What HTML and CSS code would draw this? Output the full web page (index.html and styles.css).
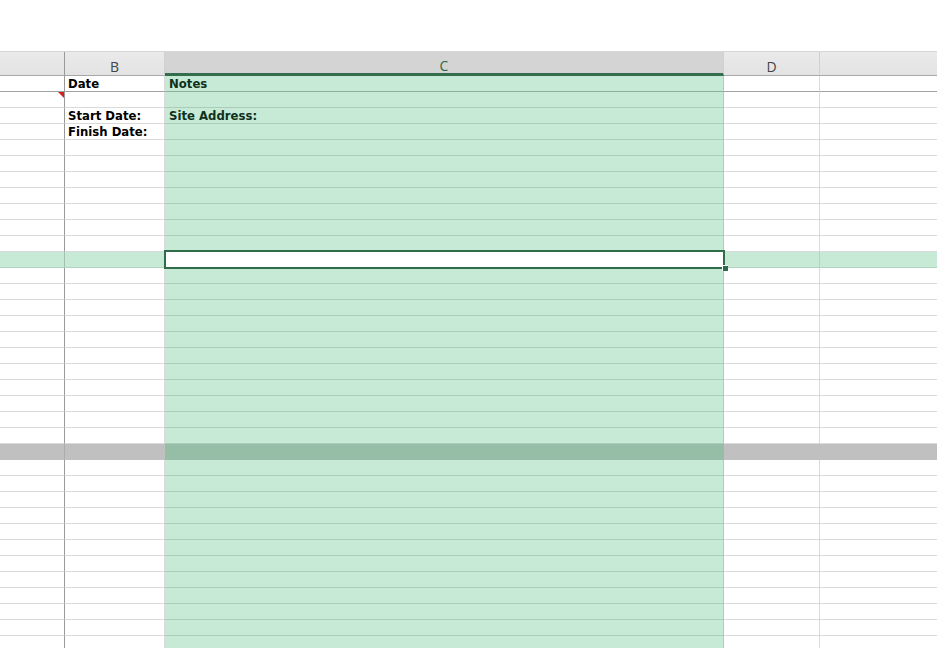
FILE: index.html
```html
<!DOCTYPE html>
<html>
<head>
<meta charset="utf-8">
<link rel="stylesheet" href="styles.css">
</head>
<body>
<div class="sheet">
  <div class="head">
    <div class="h ha"></div>
    <div class="h hb">B</div>
    <div class="h hc">C</div>
    <div class="h hd">D</div>
    <div class="h he"></div>
  </div>
  <div class="row first"><div class="a"></div><div class="b">Date</div><div class="c">Notes</div><div class="d"></div><div class="e"></div></div>
  <div class="row"><div class="a note"></div><div class="b"></div><div class="c"></div><div class="d"></div><div class="e"></div></div>
  <div class="row"><div class="a"></div><div class="b">Start Date:</div><div class="c">Site Address:</div><div class="d"></div><div class="e"></div></div>
  <div class="row"><div class="a"></div><div class="b">Finish Date:</div><div class="c"></div><div class="d"></div><div class="e"></div></div>
  <div class="row"><div class="a"></div><div class="b"></div><div class="c"></div><div class="d"></div><div class="e"></div></div>
  <div class="row"><div class="a"></div><div class="b"></div><div class="c"></div><div class="d"></div><div class="e"></div></div>
  <div class="row"><div class="a"></div><div class="b"></div><div class="c"></div><div class="d"></div><div class="e"></div></div>
  <div class="row"><div class="a"></div><div class="b"></div><div class="c"></div><div class="d"></div><div class="e"></div></div>
  <div class="row"><div class="a"></div><div class="b"></div><div class="c"></div><div class="d"></div><div class="e"></div></div>
  <div class="row"><div class="a"></div><div class="b"></div><div class="c"></div><div class="d"></div><div class="e"></div></div>
  <div class="row"><div class="a"></div><div class="b"></div><div class="c"></div><div class="d"></div><div class="e"></div></div>
  <div class="row sel"><div class="a"></div><div class="b"></div><div class="c active"></div><div class="d"></div><div class="e"></div></div>
  <div class="row"><div class="a"></div><div class="b"></div><div class="c"></div><div class="d"></div><div class="e"></div></div>
  <div class="row"><div class="a"></div><div class="b"></div><div class="c"></div><div class="d"></div><div class="e"></div></div>
  <div class="row"><div class="a"></div><div class="b"></div><div class="c"></div><div class="d"></div><div class="e"></div></div>
  <div class="row"><div class="a"></div><div class="b"></div><div class="c"></div><div class="d"></div><div class="e"></div></div>
  <div class="row"><div class="a"></div><div class="b"></div><div class="c"></div><div class="d"></div><div class="e"></div></div>
  <div class="row"><div class="a"></div><div class="b"></div><div class="c"></div><div class="d"></div><div class="e"></div></div>
  <div class="row"><div class="a"></div><div class="b"></div><div class="c"></div><div class="d"></div><div class="e"></div></div>
  <div class="row"><div class="a"></div><div class="b"></div><div class="c"></div><div class="d"></div><div class="e"></div></div>
  <div class="row"><div class="a"></div><div class="b"></div><div class="c"></div><div class="d"></div><div class="e"></div></div>
  <div class="row"><div class="a"></div><div class="b"></div><div class="c"></div><div class="d"></div><div class="e"></div></div>
  <div class="row"><div class="a"></div><div class="b"></div><div class="c"></div><div class="d"></div><div class="e"></div></div>
  <div class="row gray"><div class="a"></div><div class="b"></div><div class="c"></div><div class="d"></div><div class="e"></div></div>
  <div class="row"><div class="a"></div><div class="b"></div><div class="c"></div><div class="d"></div><div class="e"></div></div>
  <div class="row"><div class="a"></div><div class="b"></div><div class="c"></div><div class="d"></div><div class="e"></div></div>
  <div class="row"><div class="a"></div><div class="b"></div><div class="c"></div><div class="d"></div><div class="e"></div></div>
  <div class="row"><div class="a"></div><div class="b"></div><div class="c"></div><div class="d"></div><div class="e"></div></div>
  <div class="row"><div class="a"></div><div class="b"></div><div class="c"></div><div class="d"></div><div class="e"></div></div>
  <div class="row"><div class="a"></div><div class="b"></div><div class="c"></div><div class="d"></div><div class="e"></div></div>
  <div class="row"><div class="a"></div><div class="b"></div><div class="c"></div><div class="d"></div><div class="e"></div></div>
  <div class="row"><div class="a"></div><div class="b"></div><div class="c"></div><div class="d"></div><div class="e"></div></div>
  <div class="row"><div class="a"></div><div class="b"></div><div class="c"></div><div class="d"></div><div class="e"></div></div>
  <div class="row"><div class="a"></div><div class="b"></div><div class="c"></div><div class="d"></div><div class="e"></div></div>
  <div class="row"><div class="a"></div><div class="b"></div><div class="c"></div><div class="d"></div><div class="e"></div></div>
  <div class="row"><div class="a"></div><div class="b"></div><div class="c"></div><div class="d"></div><div class="e"></div></div>
</div>
</body>
</html>
```
FILE: styles.css
```css
html, body {
  margin: 0;
  padding: 0;
  background: #ffffff;
}

.sheet {
  margin-top: 51px;
  width: 937px;
  height: 597px;
  overflow: hidden;
  border-top: 1px solid #d6d6d6;
  box-sizing: border-box;
}

.head,
.row {
  display: grid;
  grid-template-columns: 65px 100px 559px 96px 117px;
}

.h {
  box-sizing: border-box;
  height: 24px;
  padding-top: 6px;
  background: linear-gradient(#eaeaea, #e3e3e3);
  border-right: 1px solid #d0d0d0;
  border-bottom: 1px solid #a8a8a8;
  font-family: "Open Sans", "DejaVu Sans", sans-serif;
  font-size: 14px;
  font-weight: 400;
  color: #444444;
  text-align: center;
  line-height: 17px;
}

.h.ha {
  border-right-color: #9a9a9a;
}

.h.hc {
  background: #d4d4d4;
  border-bottom: 3px solid #336f4c;
  color: #2c6a46;
  padding-top: 7px;
  line-height: 14px;
}

.h.he {
  border-right: none;
}

.row > div {
  box-sizing: border-box;
  height: 16px;
  padding-top: 2px;
  border-bottom: 1px solid #dadada;
  border-right: 1px solid #dadada;
  font-family: "DejaVu Sans", Verdana, sans-serif;
  font-weight: bold;
  font-size: 11.7px;
  line-height: 13px;
  padding-left: 3px;
  color: #000000;
  white-space: nowrap;
}

.row > .a {
  border-right-color: #9a9a9a;
}

.row > .c {
  padding-left: 4px;
  background: #c6ead6;
  border-bottom-color: #abcdb7;
  border-right-color: #aecdb9;
  color: #0f301c;
}

.row > .e {
  border-right: none;
}

.row.first > div {
  border-bottom-color: #a2a2a2;
}

.row.first > .c {
  border-bottom-color: #8fae9b;
}

.row.sel > div {
  background: #c6ead6;
  border-bottom-color: #b4d3bf;
}

.row.sel > .a {
  border-right-color: #a4bfae;
}

.row.sel > .b,
.row.sel > .d {
  border-right-color: #b4d3bf;
}

.row.sel > .c.active {
  position: relative;
  background: #ffffff;
}

.active::before {
  content: "";
  position: absolute;
  left: -1px;
  top: -2px;
  right: -2px;
  bottom: -2px;
  border: 2px solid #2f6c49;
}

.active::after {
  content: "";
  position: absolute;
  right: -5px;
  bottom: -4px;
  width: 5px;
  height: 5px;
  background: #2f6c49;
  border-left: 1px solid #ffffff;
  border-top: 1px solid #ffffff;
}

.row.gray > div {
  background: #c0c0c0;
  border-bottom-color: #c0c0c0;
  border-right-color: #c0c0c0;
}

.row.gray > .a {
  border-right-color: #acacac;
}

.row.gray > .c {
  background: #96bda5;
  border-bottom-color: #96bda5;
  border-right-color: #96bda5;
}

.note {
  position: relative;
}

.note::after {
  content: "";
  position: absolute;
  top: 0;
  right: 0;
  width: 0;
  height: 0;
  border-top: 6px solid #d21f1f;
  border-left: 6px solid transparent;
}
```
